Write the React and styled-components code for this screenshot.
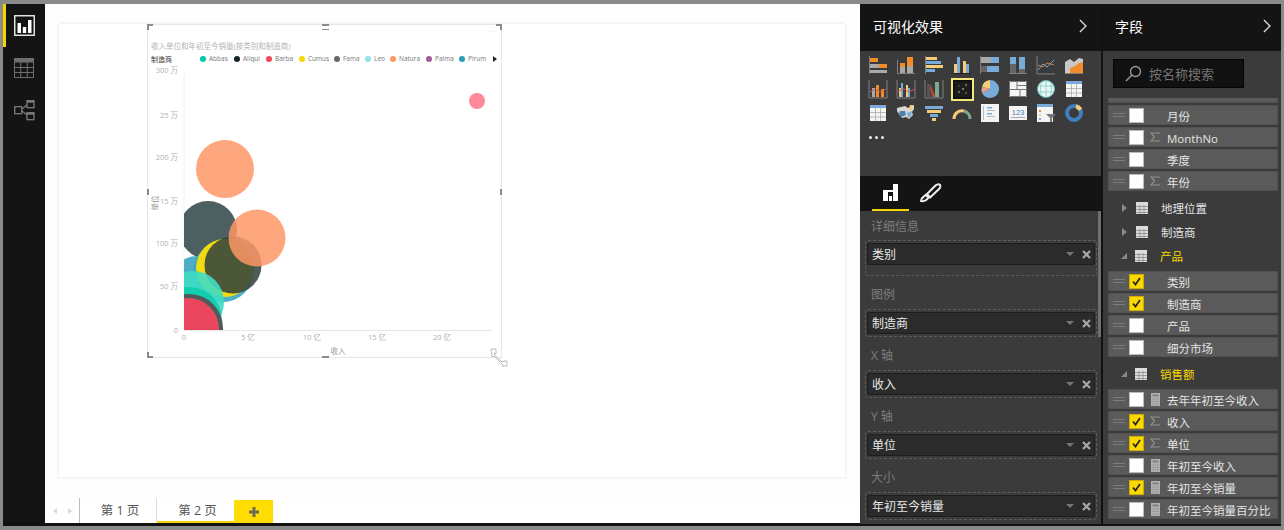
import styled, { createGlobalStyle } from 'styled-components';

const FONT = '"Open Sans", "Noto Sans CJK SC", sans-serif';

const GlobalStyle = createGlobalStyle`
  html, body { margin: 0; padding: 0; background: #8a8a8a; }
  * { box-sizing: border-box; }
  body { font-family: ${FONT}; }
`;

const Frame = styled.div`
  width: 1284px;
  height: 530px;
  padding: 4px 3px 4px 3px;
  overflow: hidden;
`;
const Shell = styled.div`
  display: flex;
  height: 522px;
  background: #111;
  padding-bottom: 2px;
`;

/* left nav */
const Nav = styled.nav`
  width: 42px;
  flex: none;
  height: 517px;
  background: #141414;
`;
const NavItem = styled.div`
  height: 42.5px;
  display: flex;
  align-items: center;
  justify-content: center;
  border-left: 3px solid ${(p) => (p.$active ? '#f2d600' : 'transparent')};
  padding-right: 3px;
`;

/* report canvas */
const Canvas = styled.main`
  width: 815px;
  flex: none;
  height: 519px;
  background: #fff;
  display: flex;
  flex-direction: column;
`;
const ReportArea = styled.div`
  flex: 1;
  padding: 20px 15px 0 14px;
  background: #fdfdfd;
`;
const Page = styled.div`
  height: 453px;
  background: #fff;
  box-shadow: 0 0 3px rgba(0, 0, 0, 0.12);
  padding-left: 88px;
`;
const Visual = styled.section`
  position: relative;
  width: 355px;
  height: 334px;
  border: 1px solid #e6e6e6;
  background: #fff;
`;
const ChartTitle = styled.div`
  padding: 15px 0 0 3px;
  height: 27px;
  font-size: 7.5px;
  line-height: 12px;
  color: #b4b4b4;
`;
const Legend = styled.div`
  display: flex;
  align-items: center;
  height: 13px;
  padding-left: 3px;
  font-size: 6.5px;
  color: #777;
`;
const LegendTitle = styled.span`
  width: 49px;
  flex: none;
  font-size: 7px;
  color: #333;
`;
const LegendItem = styled.span`
  display: inline-flex;
  align-items: center;
  gap: 3px;
  width: ${(p) => p.$w}px;
  flex: none;
  white-space: nowrap;
`;
const Dot = styled.i`
  width: 6px;
  height: 6px;
  border-radius: 50%;
  background: ${(p) => p.$c};
`;
const LegendMore = styled.i`
  width: 0;
  height: 0;
  margin-left: 0;
  border-left: 4px solid #222;
  border-top: 3px solid transparent;
  border-bottom: 3px solid transparent;
`;
const Plot = styled.svg`
  display: block;
`;
const Handle = styled.i`
  position: absolute;
  background: #8c8c8c;
  left: ${(p) => p.$l};
  right: ${(p) => p.$r};
  top: ${(p) => p.$t};
  bottom: ${(p) => p.$b};
  width: ${(p) => p.$w}px;
  height: ${(p) => p.$h}px;
`;
const VisualMenu = styled.span`
  position: absolute;
  right: 4px;
  top: 0;
  font-size: 8px;
  letter-spacing: 1px;
  color: #ddd;
`;
const ResizeCursor = styled.svg`
  position: absolute;
  right: -8px;
  bottom: -10px;
`;

const TabBar = styled.div`
  height: 25px;
  display: flex;
  align-items: stretch;
  background: #fff;
`;
const TabArrows = styled.div`
  width: 35px;
  display: flex;
  align-items: center;
  justify-content: center;
  gap: 11px;
  border-right: 1px solid #bbb;
`;
const TabArrow = styled.i`
  width: 0;
  height: 0;
  border-top: 3.5px solid transparent;
  border-bottom: 3.5px solid transparent;
  ${(p) => (p.$left ? 'border-right: 4px solid #d8d8d8;' : 'border-left: 4px solid #d8d8d8;')}
`;
const Tab = styled.div`
  width: ${(p) => p.$w}px;
  display: flex;
  align-items: center;
  justify-content: center;
  padding-left: 4px;
  font-size: 12.5px;
  color: #555;
  border-right: ${(p) => (p.$active ? '0' : '1px solid #ddd')};
  border-bottom: 2px solid ${(p) => (p.$active ? '#f2d600' : 'transparent')};
  white-space: pre;
`;
const AddTab = styled.div`
  width: 39px;
  margin-top: 2px;
  background: #ffdd00;
  display: flex;
  align-items: center;
  justify-content: center;
`;

/* shared pane parts */
const Pane = styled.aside`
  flex: none;
  width: ${(p) => p.$w}px;
  margin-left: ${(p) => p.$ml || 0}px;
  height: 520px;
  background: #3b3b3b;
  position: relative;
  overflow: hidden;
`;
const PaneHeader = styled.header`
  height: 47px;
  background: #141414;
  display: flex;
  align-items: center;
  justify-content: space-between;
  padding: 0 ${(p) => p.$pr}px 3px ${(p) => p.$pl}px;
  color: #fff;
  font-size: 14px;
`;

/* visualizations */
const VizGrid = styled.div`
  height: 125px;
  padding: 2px 0 0 4px;
  display: grid;
  grid-template-columns: repeat(8, 28px);
  grid-auto-rows: 24px;
`;
const VizCell = styled.div`
  display: flex;
  align-items: center;
  justify-content: center;
`;
const SelectedViz = styled.div`
  width: 23px;
  height: 23px;
  border: 2px solid #f4e87a;
  background: #111;
  display: flex;
  align-items: center;
  justify-content: center;
`;
const MoreDots = styled.div`
  display: flex;
  gap: 3px;
  align-items: center;
  padding-left: 5px;
  & i {
    width: 3px;
    height: 3px;
    background: #eee;
    border-radius: 50%;
  }
`;
const FormatTabs = styled.div`
  height: 35px;
  background: #141414;
  display: flex;
  padding-left: 12px;
`;
const FormatTab = styled.div`
  width: ${(p) => p.$w}px;
  display: flex;
  align-items: center;
  justify-content: center;
  border-bottom: 2px solid ${(p) => (p.$active ? '#f2d600' : 'transparent')};
`;
const WellScroll = styled.div`
  position: absolute;
  right: 0;
  top: 207px;
  width: 3px;
  height: 126px;
  background: #707070;
`;
const WellSection = styled.section`
  padding: 0 4px 0 5px;
`;
const WellLabel = styled.div`
  padding: 10px 0 5px 6px;
  height: 33px;
  font-size: 12px;
  line-height: 18px;
  color: #7d7d7d;
  ${WellSection}:first-of-type & {
    padding-top: 7px;
    height: 29px;
  }
`;
const Well = styled.div`
  border: 1px dashed #5c5c5c;
  border-radius: 3px;
  padding: 2px 1px;
  min-height: ${(p) => (p.$tall ? 36 : 28)}px;
`;
const WellPill = styled.div`
  height: 22px;
  background: #2b2b2b;
  border: 1px solid #1d1d1d;
  border-radius: 2px;
  display: flex;
  align-items: center;
  padding: 0 3px 0 4px;
  font-size: 12px;
  color: #e8e8e8;
`;
const WellName = styled.span`
  flex: 1;
`;
const Caret = styled.i`
  width: 0;
  height: 0;
  margin-right: 8px;
  border-left: 4px solid transparent;
  border-right: 4px solid transparent;
  border-top: 4px solid #777;
`;

/* fields */
const SearchBox = styled.div`
  margin: 8px 0 0 10px;
  width: 131px;
  height: 29px;
  background: #111;
  border: 1px solid #050505;
  display: flex;
  align-items: center;
  gap: 7px;
  padding-left: 11px;
  font-size: 13px;
  color: #747474;
`;
const FieldList = styled.div`
  margin-top: 10px;
  padding: 0 3px 0 5px;
  height: 426px;
  overflow: hidden;
`;
const Stack = styled.div`
  display: flex;
  flex-direction: column;
  gap: 2px;
  padding: 3px 0 5px;
  margin-top: ${(p) => p.$mt || 0}px;
`;
const FieldRow = styled.div`
  height: 20px;
  flex: none;
  background: #5a5a5a;
  border-radius: 2px;
  box-shadow: inset 0 0 0 1px #525252;
  display: flex;
  align-items: center;
  padding-left: 5px;
  font-size: 11.5px;
  color: #e4e4e4;
  white-space: nowrap;
`;
const FieldName = styled.span`
  padding-top: 2px;
`;
const Grip = styled.i`
  width: 12px;
  height: 4px;
  flex: none;
  border-top: 1px solid #7c7c7c;
  border-bottom: 1px solid #7c7c7c;
`;
const Check = styled.span`
  width: 13px;
  height: 13px;
  flex: none;
  margin: 0 7px 0 5px;
  background: ${(p) => (p.$on ? '#fbd800' : '#fff')};
  box-shadow: 0 0 0 1px ${(p) => (p.$on ? '#c9ad00' : '#bbb')};
  display: flex;
  align-items: center;
  justify-content: center;
`;
const TypeSlot = styled.span`
  width: 10px;
  height: 14px;
  flex: none;
  margin-right: 7px;
  display: flex;
  align-items: center;
  justify-content: center;
`;
const GroupRow = styled.div`
  height: 24px;
  display: flex;
  align-items: center;
  padding-left: 14px;
  font-size: 11.5px;
  color: ${(p) => (p.$open ? '#f8d800' : '#e4e4e4')};
`;
const Twisty = styled.i`
  width: 0;
  height: 0;
  flex: none;
  margin-right: 8px;
  ${(p) =>
    p.$open
      ? 'border-bottom: 6px solid #8a8a8a; border-left: 6px solid transparent; margin-left: -1px;'
      : 'border-left: 5px solid #8a8a8a; border-top: 4px solid transparent; border-bottom: 4px solid transparent; margin-right: 9px;'}
`;
const GroupName = styled.span`
  margin-left: 13px;
`;

const OR = '#f28c28';
const GR = '#a9a9a9';
const YE = '#f3cd78';
const BL = '#79abd9';
const AX = '#808080';
const WH = '#f4f4f4';

function R({ x, y, w, h, c }) {
  return <rect x={x} y={y} width={w} height={h} fill={c} />;
}

const vizIcons = {
  stackedBar: (
    <>
      <R x={1} y={1} w={1} h={18} c={AX} />
      <R x={2} y={3} w={8} h={4} c={OR} />
      <R x={2} y={9} w={11} h={4} c={GR} /><R x={11} y={9} w={8} h={4} c={OR} />
      <R x={2} y={15} w={17} h={3} c={GR} />
    </>
  ),
  stackedCol: (
    <>
      <R x={1} y={18} w={18} h={1} c={AX} /><R x={1} y={5} w={1} h={13} c={AX} />
      <R x={4} y={12} w={5} h={6} c={GR} /><R x={4} y={8} w={5} h={4} c={OR} />
      <R x={11} y={11} w={6} h={7} c={GR} /><R x={11} y={2} w={6} h={9} c={OR} />
    </>
  ),
  clusterBar: (
    <>
      <R x={1} y={2} w={12} h={3} c={YE} /><R x={1} y={6} w={16} h={3} c={BL} />
      <R x={1} y={10} w={18} h={3} c={YE} /><R x={1} y={14} w={10} h={3} c={BL} />
      <R x={1} y={1} w={1} h={18} c={AX} />
    </>
  ),
  clusterCol: (
    <>
      <R x={2} y={9} w={3} h={9} c={YE} /><R x={5} y={2} w={3} h={16} c={BL} />
      <R x={11} y={6} w={3} h={12} c={YE} /><R x={14} y={9} w={3} h={9} c={BL} />
      <R x={1} y={18} w={18} h={1} c="#222" />
    </>
  ),
  fullBar: (
    <>
      <R x={1} y={2} w={10} h={6} c={GR} /><R x={11} y={2} w={8} h={6} c={BL} />
      <R x={1} y={11} w={6} h={6} c="#666" /><R x={7} y={11} w={12} h={6} c={BL} />
      <R x={0} y={1} w={1} h={18} c={AX} />
    </>
  ),
  fullCol: (
    <>
      <R x={2} y={2} w={6} h={7} c={BL} /><R x={2} y={9} w={6} h={9} c="#666" />
      <R x={11} y={2} w={6} h={12} c={BL} /><R x={11} y={14} w={6} h={4} c="#666" />
      <R x={1} y={18} w={18} h={1} c={AX} />
    </>
  ),
  line: (
    <>
      <path d="M1 1v18h18" fill="none" stroke={AX} />
      <path d="M2 15l5-6 4 3 7-7" fill="none" stroke={BL} />
      <path d="M2 10l5 2 4-4 7 2" fill="none" stroke="#c8844a" />
    </>
  ),
  area: (
    <>
      <path d="M1 18V7l5-3 4 3 5-4 4 1v14z" fill="#c9c9c9" />
      <path d="M6 18v-5l5-2 4-3 4-1v11z" fill={OR} />
      <R x={1} y={18} w={18} h={1} c={AX} />
    </>
  ),
  lineCol: (
    <>
      <path d="M1 1v18h18V1" fill="none" stroke={AX} />
      <R x={4} y={9} w={3} h={9} c={GR} /><R x={8} y={6} w={3} h={12} c={OR} /><R x={13} y={10} w={3} h={8} c={OR} />
      <path d="M2 13l5-3 5 3 6-3" fill="none" stroke="#d05a50" />
    </>
  ),
  lineCol2: (
    <>
      <path d="M1 1v18h18V1" fill="none" stroke={AX} />
      <R x={3} y={9} w={2} h={9} c={YE} /><R x={5} y={4} w={2} h={14} c={BL} />
      <R x={10} y={6} w={2} h={12} c={YE} /><R x={12} y={9} w={2} h={9} c={BL} />
      <path d="M2 12l6-2 5 3 6-3" fill="none" stroke="#d05a50" />
    </>
  ),
  ribbon: (
    <>
      <path d="M1 1v18h18V1" fill="none" stroke={AX} />
      <path d="M3 5h3v13H3z" fill="#555" /><path d="M6 5l5 11v2H8L6 10z" fill="#b04a40" />
      <path d="M11 3h4v15h-4z" fill="#7fa890" />
    </>
  ),
  pie: (
    <>
      <path d="M10 1a9 9 0 1 1-8 13l8-4z" fill={BL} />
      <path d="M10 1v9l-8-2a9 9 0 0 1 8-7z" fill={YE} />
      <path d="M2 8l8 2-8 4a9 9 0 0 1 0-6z" fill="#e8a090" />
    </>
  ),
  treemap: (
    <>
      <R x={1} y={2} w={18} h={16} c={WH} />
      <path d="M1.500 2.500h17v15h-17zM9 2.500v8M1.500 10.500h17M12 10.500v7M9 6.500h9.500" fill="none" stroke="#777" />
    </>
  ),
  globe: (
    <>
      <circle cx="10" cy="10" r="8.500" fill="#eef6f6" stroke="#5fb8b8" />
      <path d="M2 7h16M2 13h16M10 2v16M6 3c-2 4-2 10 0 14M14 3c2 4 2 10 0 14" fill="none" stroke="#7cc" strokeWidth=".8" />
    </>
  ),
  table: (
    <>
      <R x={2} y={2} w={16} h={16} c={WH} />
      <R x={2} y={2} w={16} h={3} c={BL} />
      <path d="M7.500 5v13M12.500 5v13M2 9.500h16M2 14h16" stroke="#aaa" strokeWidth=".8" />
    </>
  ),
  filledMap: (
    <>
      <path d="M1 5l8-2 3 2 6-3v4l-2 3 1 3-4 4-3-2-4 1-3-4-2-3z" fill="#d8d8d8" />
      <path d="M4 8l5 0 1 4-5 2-2-4z" fill="#4f7fae" />
      <path d="M11 10l5-2-1 5-3 2z" fill={BL} />
      <path d="M14 2l3 0-1 6-3-2z" fill={YE} />
    </>
  ),
  funnel: (
    <>
      <R x={1} y={3} w={18} h={3} c={BL} />
      <R x={3} y={7} w={14} h={3} c={YE} />
      <R x={6} y={11} w={8} h={3} c={BL} />
      <R x={8} y={15} w={4} h={3} c={YE} />
    </>
  ),
  gauge: (
    <>
      <path d="M2 16a8 8 0 0 1 10-8" fill="none" stroke={YE} strokeWidth="3" />
      <path d="M12 8a8 8 0 0 1 6 8" fill="none" stroke="#7fa890" strokeWidth="3" />
    </>
  ),
  multiCard: (
    <>
      <R x={1} y={1} w={18} h={18} c={WH} />
      <R x={3} y={3} w={1} h={14} c="#bbb" />
      <R x={7} y={4} w={5} h={1.500} c={BL} /><R x={7} y={7} w={8} h={1} c="#bbb" />
      <R x={7} y={10} w={5} h={1.500} c={BL} /><R x={7} y={13} w={8} h={1} c="#bbb" />
    </>
  ),
  card: (
    <>
      <R x={1} y={3} w={18} h={14} c={WH} />
      <R x={3} y={14} w={14} h={1} c="#aaa" />
      <text x="10" y="11.500" fontSize="7.500" textAnchor="middle" fill="#4a7fb5" fontFamily="Liberation Sans">123</text>
    </>
  ),
  slicer: (
    <>
      <R x={1} y={1} w={16} h={18} c={WH} />
      <R x={1} y={1} w={16} h={3} c={BL} />
      <R x={3} y={7} w={2} h={2} c={OR} /><R x={3} y={11} w={2} h={2} c={YE} /><R x={3} y={15} w={2} h={2} c={BL} />
      <path d="M10 11h10l-4 4v4h-2v-4z" fill="#777" />
    </>
  ),
  donut: (
    <>
      <circle cx="10" cy="10" r="7" fill="none" stroke="#3f7fbf" strokeWidth="4" />
      <path d="M12 3.300a7 7 0 0 1 4.500 3.500" fill="none" stroke={YE} strokeWidth="4" />
    </>
  ),
};

const vizOrder = [
  'stackedBar', 'stackedCol', 'clusterBar', 'clusterCol', 'fullBar', 'fullCol', 'line', 'area',
  'lineCol', 'lineCol2', 'ribbon', 'scatter', 'pie', 'treemap', 'globe', 'table',
  'table', 'filledMap', 'funnel', 'gauge', 'multiCard', 'card', 'slicer', 'donut',
];

function ScatterIcon() {
  return (
    <SelectedViz>
      <svg width="15" height="15" viewBox="0 0 15 15">
        <rect width="15" height="15" fill="#1c1c1c" />
        <circle cx="4" cy="10" r="1.200" fill="#666" />
        <circle cx="8" cy="7" r="1.200" fill="#777" />
        <circle cx="11" cy="3" r="1.200" fill="#666" />
        <circle cx="11" cy="11" r="1.200" fill="#555" />
        <circle cx="4" cy="4" r="1" fill="#444" />
      </svg>
    </SelectedViz>
  );
}

function ReportIcon() {
  return (
    <svg width="21" height="21" viewBox="0 0 21 21">
      <rect x=".75" y=".75" width="19.500" height="19.500" fill="none" stroke="#eee" strokeWidth="1.400" />
      <path d="M3.500 18V8h3.500v10zM8.800 18v-6h3.400v6zM14 18V5h3.500v13z" fill="#fff" />
    </svg>
  );
}

function DataIcon() {
  return (
    <svg width="20" height="20" viewBox="0 0 20 20">
      <rect x=".5" y=".5" width="19" height="19" fill="none" stroke="#6e6e6e" />
      <rect x="0" y="0" width="20" height="4.500" fill="#6e6e6e" />
      <path d="M0 9.500h20M0 14.500h20M6.700 4v16M13.300 4v16" stroke="#6e6e6e" />
    </svg>
  );
}

function ModelIcon() {
  return (
    <svg width="21" height="21" viewBox="0 0 21 21">
      <g fill="none" stroke="#7a7a7a" strokeWidth="1.300">
        <rect x=".7" y="6.700" width="7" height="7" />
        <rect x="13" y=".7" width="7" height="7" />
        <rect x="13" y="12.700" width="7" height="7" />
        <path d="M8 9l5-4M8 11l5 4" />
      </g>
      <rect x="13" y=".7" width="7" height="2" fill="#7a7a7a" />
      <rect x="13" y="12.700" width="7" height="2" fill="#7a7a7a" />
    </svg>
  );
}

function Chevron({ size = 14 }) {
  return (
    <svg width={size * 0.6} height={size} viewBox="0 0 9 15">
      <path d="M1 1l6.500 6.500L1 14" fill="none" stroke="#ddd" strokeWidth="1.400" />
    </svg>
  );
}

function CloseX() {
  return (
    <svg width="9" height="9" viewBox="0 0 9 9">
      <path d="M1 1l7 7M8 1L1 8" stroke="#a8a8a8" strokeWidth="2.200" />
    </svg>
  );
}

function Sigma() {
  return (
    <svg width="10" height="10" viewBox="0 0 10 10">
      <path d="M9 2V1H1l3.500 4L1 9h8V8" fill="none" stroke="#8f8f8f" strokeWidth="1.200" />
    </svg>
  );
}

function Calc() {
  return (
    <svg width="9" height="13" viewBox="0 0 9 13">
      <rect width="9" height="13" fill="#b0b0b0" />
      <rect x="1.500" y="1.500" width="6" height="2" fill="#808080" />
      <path d="M1.500 6h6M1.500 8.500h6M1.500 11h6" stroke="#8a8a8a" strokeDasharray="1.500 .8" />
    </svg>
  );
}

function Tick() {
  return (
    <svg width="11" height="11" viewBox="0 0 11 11">
      <path d="M2 5.500l2.500 3L9 2" fill="none" stroke="#222" strokeWidth="1.700" />
    </svg>
  );
}

function TableGlyph() {
  return (
    <svg width="12" height="12" viewBox="0 0 12 12">
      <rect width="12" height="12" fill="#dcdcdc" />
      <path d="M0 4.500h12M0 7.500h12M0 10.500h12M4 3v9M8 3v9" stroke="#8a8a8a" strokeWidth=".8" />
    </svg>
  );
}

function Field({ name, on, type }) {
  return (
    <FieldRow>
      <Grip />
      <Check $on={on}>{on && <Tick />}</Check>
      <TypeSlot>
        {type === 'sum' && <Sigma />}
        {type === 'calc' && <Calc />}
      </TypeSlot>
      <FieldName>{name}</FieldName>
    </FieldRow>
  );
}

function Group({ name, open }) {
  return (
    <GroupRow $open={open}>
      <Twisty $open={open} />
      <TableGlyph />
      <GroupName>{name}</GroupName>
    </GroupRow>
  );
}

const legend = [
  ['Abbas', '#01c8a4', 34],
  ['Aliqui', '#15262a', 32],
  ['Barba', '#f2475f', 33],
  ['Cumus', '#f5dc00', 35],
  ['Fama', '#5f6b6d', 31],
  ['Leo', '#95e0ec', 25],
  ['Natura', '#fe9666', 36],
  ['Palma', '#a05a94', 33],
  ['Pirum', '#2f9db8', 34],
];

const bubbles = [
  { cx: 208, cy: 230, r: 29, c: '#3d5254', o: 0.92 },
  { cx: 197, cy: 282, r: 26, c: '#3aa5c4', o: 0.9 },
  { cx: 223, cy: 272, r: 30, c: '#3aa5c4', o: 0.9 },
  { cx: 225, cy: 268, r: 29, c: '#f0dc10', o: 1 },
  { cx: 233, cy: 265, r: 28.5, c: '#2e3f3d', o: 0.85 },
  { cx: 225, cy: 169, r: 29, c: '#fe9666', o: 0.85 },
  { cx: 193, cy: 302, r: 31, c: '#3fdcc4', o: 0.9 },
  { cx: 189, cy: 320, r: 33, c: '#01c8a4', o: 0.7 },
  { cx: 189, cy: 328, r: 34, c: '#4f5a5c', o: 1 },
  { cx: 188, cy: 329, r: 31, c: '#f2475f', o: 0.95 },
];

const yTicks = [['300 万', 70], ['25 万', 115], ['200 万', 157], ['15 万', 201], ['100 万', 243], ['50 万', 286], ['0', 330]];
const xTicks = [['0', 184], ['5 亿', 248], ['10 亿', 312], ['15 亿', 377], ['20 亿', 442]];

function Chart() {
  return (
    <Plot width="353" height="293" viewBox="148 65 353 293">
      <defs>
        <clipPath id="plot-clip">
          <rect x="184" y="65" width="310" height="265" />
        </clipPath>
      </defs>
      <line x1="184" y1="70" x2="184" y2="330" stroke="#f2f2f2" />
      <line x1="184" y1="330.500" x2="492" y2="330.500" stroke="#e6e6e6" />
      <g clipPath="url(#plot-clip)">
        {bubbles.map((b) => (
          <circle key={`${b.cx}-${b.cy}`} cx={b.cx} cy={b.cy} r={b.r} fill={b.c} fillOpacity={b.o} />
        ))}
        <circle cx="257" cy="238" r="28.500" fill="#fe9666" fillOpacity="0.85" />
        <circle cx="477" cy="101" r="8" fill="#ff8296" fillOpacity="0.95" />
      </g>
      <g fontSize="7.500" fill="#b0b0b0" fontFamily={FONT}>
        {yTicks.map(([t, y]) => (
          <text key={t} x="178" y={y + 2.5} textAnchor="end">{t}</text>
        ))}
        {xTicks.map(([t, x]) => (
          <text key={t} x={x} y="340" textAnchor="middle">{t}</text>
        ))}
        <text x="338" y="354" textAnchor="middle" fill="#999">收入</text>
        <text x="0" y="0" textAnchor="middle" fill="#999" transform="translate(158 203) rotate(-90)">单位</text>
      </g>
    </Plot>
  );
}

function VizWell({ label, value, tall }) {
  return (
    <WellSection>
      <WellLabel>{label}</WellLabel>
      <Well $tall={tall}>
        <WellPill>
          <WellName>{value}</WellName>
          <Caret />
          <CloseX />
        </WellPill>
      </Well>
    </WellSection>
  );
}

export default function App() {
  return (
    <Frame>
      <GlobalStyle />
      <Shell>
        <Nav>
          <NavItem $active><ReportIcon /></NavItem>
          <NavItem><DataIcon /></NavItem>
          <NavItem><ModelIcon /></NavItem>
        </Nav>

        <Canvas>
          <ReportArea>
            <Page>
              <Visual>
                <VisualMenu>···</VisualMenu>
                <ChartTitle>收入单位和年初至今销量(按类别和制造商)</ChartTitle>
                <Legend>
                  <LegendTitle>制造商</LegendTitle>
                  {legend.map(([name, color, w]) => (
                    <LegendItem key={name} $w={w}>
                      <Dot $c={color} />
                      {name}
                    </LegendItem>
                  ))}
                  <LegendMore />
                </Legend>
                <Chart />
                <Handle $l="-1px" $t="-1px" $w={6} $h={2} />
                <Handle $l="-1px" $t="-1px" $w={2} $h={6} />
                <Handle $r="-1px" $t="-1px" $w={6} $h={2} />
                <Handle $r="-1px" $t="-1px" $w={2} $h={6} />
                <Handle $l="-1px" $b="-1px" $w={6} $h={2} />
                <Handle $l="-1px" $b="-1px" $w={2} $h={6} />
                <Handle $l="174px" $t="-1px" $w={7} $h={2} />
                <Handle $l="174px" $t="4px" $w={7} $h={1} />
                <Handle $l="174px" $b="-1px" $w={7} $h={2} />
                <Handle $l="-1px" $t="164px" $w={2} $h={6} />
                <Handle $r="-1px" $t="164px" $w={2} $h={6} />
                <ResizeCursor width="19" height="19" viewBox="0 0 19 19">
                  <path d="M1 1h5v5l-1-1-1 1 8 8 1-1 1 1v-1l3 0v5h-5l1-1-1-1-8-8-1 1-1-1z" fill="#fff" stroke="#aaa" strokeWidth=".8" />
                </ResizeCursor>
              </Visual>
            </Page>
          </ReportArea>
          <TabBar>
            <TabArrows>
              <TabArrow $left />
              <TabArrow />
            </TabArrows>
            <Tab $w={77}>第 1 页</Tab>
            <Tab $w={77} $active>第 2 页</Tab>
            <AddTab>
              <svg width="12" height="12" viewBox="0 0 12 12">
                <path d="M6 1v10M1 6h10" stroke="#6d6d55" strokeWidth="3" />
              </svg>
            </AddTab>
          </TabBar>
        </Canvas>

        <Pane $w={241}>
          <PaneHeader $pl={13} $pr={14}>
            可视化效果
            <Chevron />
          </PaneHeader>
          <VizGrid>
            {vizOrder.map((kind, i) => (
              <VizCell key={i}>
                {kind === 'scatter' ? (
                  <ScatterIcon />
                ) : (
                  <svg width="20" height="20" viewBox="0 0 20 20">{vizIcons[kind]}</svg>
                )}
              </VizCell>
            ))}
            <MoreDots><i /><i /><i /></MoreDots>
          </VizGrid>
          <FormatTabs>
            <FormatTab $w={37} $active>
              <svg width="17" height="17" viewBox="0 0 17 17">
                <path d="M1 6h5v11H1zM7 12h3v5H7zM11 0h5v17h-5zM6 6h5v2H6z" fill="#fff" />
              </svg>
            </FormatTab>
            <FormatTab $w={44}>
              <svg width="22" height="20" viewBox="0 0 22 20">
                <path d="M1 18c0-4 3-4 4.500-6l3 2.500C7 17 4 18.500 1 18z" fill="none" stroke="#eee" strokeWidth="2" />
                <path d="M7 11l8-8c2-2 4-2 5-1s0 3-1.500 4.500L10 14.500z" fill="none" stroke="#eee" strokeWidth="2" />
              </svg>
            </FormatTab>
          </FormatTabs>
          <VizWell label="详细信息" value="类别" tall />
          <VizWell label="图例" value="制造商" />
          <VizWell label="X 轴" value="收入" />
          <VizWell label="Y 轴" value="单位" />
          <VizWell label="大小" value="年初至今销量" />
          <WellScroll />
        </Pane>

        <Pane $w={178} $ml={2}>
          <PaneHeader $pl={12} $pr={10}>
            字段
            <Chevron />
          </PaneHeader>
          <SearchBox>
            <svg width="17" height="17" viewBox="0 0 17 17">
              <circle cx="10.500" cy="6.500" r="5" fill="none" stroke="#9a9a9a" strokeWidth="1.300" />
              <path d="M7 10l-6 6" stroke="#9a9a9a" strokeWidth="1.500" />
            </svg>
            按名称搜索
          </SearchBox>
          <FieldList>
            <Stack $mt={-18}>
              <FieldRow />
              <Field name="月份" />
              <Field name="MonthNo" type="sum" />
              <Field name="季度" />
              <Field name="年份" type="sum" />
            </Stack>
            <Group name="地理位置" />
            <Group name="制造商" />
            <Group name="产品" open />
            <Stack>
              <Field name="类别" on />
              <Field name="制造商" on />
              <Field name="产品" />
              <Field name="细分市场" />
            </Stack>
            <Group name="销售额" open />
            <Stack>
              <Field name="去年年初至今收入" type="calc" />
              <Field name="收入" on type="sum" />
              <Field name="单位" on type="sum" />
              <Field name="年初至今收入" type="calc" />
              <Field name="年初至今销量" on type="calc" />
              <Field name="年初至今销量百分比" type="calc" />
            </Stack>
          </FieldList>
        </Pane>
      </Shell>
    </Frame>
  );
}
